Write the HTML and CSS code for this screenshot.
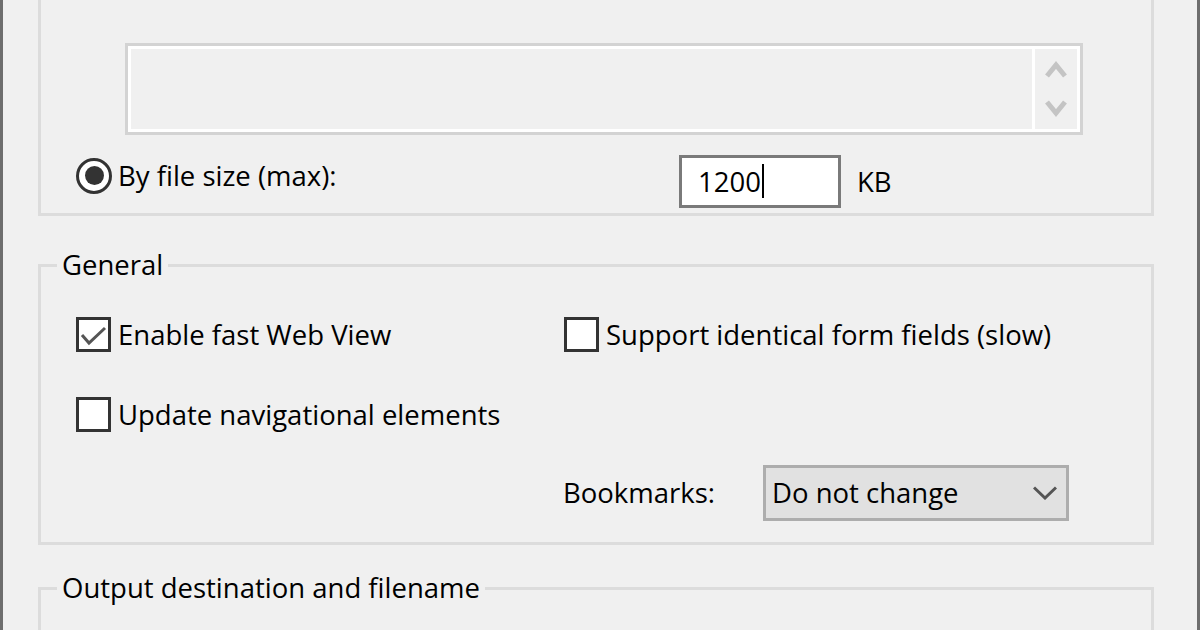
FILE: index.html
```html
<!DOCTYPE html>
<html lang="en">
<head>
<meta charset="utf-8">
<title>PDF Optimizer settings</title>
<link rel="stylesheet" href="styles.css">
</head>
<body>
<div class="window">
  <div class="group group-top">
    <div class="listbox">
      <div class="list-area"></div>
      <div class="list-scroll">
        <svg class="scroll-arrow" width="22" height="17" viewBox="0 0 22 17"><polyline points="2,15 11,4 20,15" fill="none" stroke="#c4c4c4" stroke-width="5"/></svg>
        <svg class="scroll-arrow" width="22" height="17" viewBox="0 0 22 17"><polyline points="2,2 11,13 20,2" fill="none" stroke="#c4c4c4" stroke-width="5"/></svg>
      </div>
    </div>
    <div class="size-row">
      <div class="option radio-option">
        <span class="radio"><span class="radio-dot"></span></span>
        <span class="label">By file size (max):</span>
      </div>
      <div class="edit"><span class="edit-text">1200</span><span class="caret"></span></div>
      <div class="unit">KB</div>
    </div>
  </div>

  <div class="group group-general">
    <div class="legend">General</div>
    <div class="check-row">
      <div class="option">
        <span class="checkbox"><svg width="29" height="29" viewBox="0 0 29 29"><polyline points="3,15 10,23 26,8" fill="none" stroke="#555" stroke-width="3"/></svg></span>
        <span class="label">Enable fast Web View</span>
      </div>
      <div class="option">
        <span class="checkbox"></span>
        <span class="label">Support identical form fields (slow)</span>
      </div>
    </div>
    <div class="check-row row-second">
      <div class="option">
        <span class="checkbox"></span>
        <span class="label">Update navigational elements</span>
      </div>
    </div>
    <div class="bookmarks-row">
      <div class="bookmarks-label">Bookmarks:</div>
      <div class="dropdown">
        <span>Do not change</span>
        <svg width="24" height="14" viewBox="0 0 24 14"><polyline points="1,1.5 12,12 23,1.5" fill="none" stroke="#555" stroke-width="3"/></svg>
      </div>
    </div>
  </div>

  <div class="group group-output">
    <div class="legend">Output destination and filename</div>
  </div>
</div>
</body>
</html>
```

FILE: styles.css
```css
html, body {
  margin: 0;
  padding: 0;
  background: #f0f0f0;
}

body {
  font-family: "Open Sans", "Noto Sans", "Liberation Sans", sans-serif;
  font-size: 27.5px;
  line-height: 38px;
  color: #000;
}

.window {
  box-sizing: border-box;
  width: 1200px;
  height: 630px;
  overflow: hidden;
  border-left: 3px solid #6e6e6e;
  border-right: 3px solid #6e6e6e;
  padding-left: 35px;
  background: #f0f0f0;
}

.group {
  box-sizing: border-box;
  width: 1116px;
  border: 3px solid #dcdcdc;
}

.group-top {
  border-top: none;
  height: 216px;
  padding-top: 43px;
}

.listbox {
  box-sizing: border-box;
  margin-left: 84px;
  width: 958px;
  height: 92px;
  display: flex;
  border: 3px solid #d3d3d3;
  box-shadow: inset 0 0 0 3px #fff;
  background: #f0f0f0;
}

.list-area {
  flex: 1;
}

.list-scroll {
  box-sizing: border-box;
  width: 48px;
  border-left: 3px solid #fff;
  display: flex;
  flex-direction: column;
  align-items: center;
  justify-content: center;
  gap: 22px;
  padding-right: 3px;
}

.scroll-arrow {
  display: block;
}

.size-row {
  display: flex;
  align-items: flex-start;
  padding-left: 35px;
}

.option {
  display: flex;
  align-items: center;
  gap: 7px;
  height: 35px;
  white-space: nowrap;
}

.radio-option {
  width: 603px;
  margin-top: 23px;
  gap: 6px;
}

.radio {
  box-sizing: border-box;
  width: 36px;
  height: 36px;
  border: 3px solid #333;
  border-radius: 50%;
  background: #fff;
  display: flex;
  align-items: center;
  justify-content: center;
  flex: none;
}

.radio-dot {
  width: 19px;
  height: 19px;
  border-radius: 50%;
  background: #333;
}

.edit {
  box-sizing: border-box;
  margin-top: 20px;
  width: 162px;
  height: 53px;
  border: 3px solid #7a7a7a;
  background: #fff;
  display: flex;
  align-items: center;
  padding-left: 16px;
}

.caret {
  width: 2px;
  height: 34px;
  background: #000;
  margin-left: 1px;
  margin-top: -2px;
}

.unit {
  margin-left: 16px;
  margin-top: 20px;
  height: 53px;
  display: flex;
  align-items: center;
}

.group-general {
  margin-top: 48px;
  padding-bottom: 21px;
}

.legend {
  width: fit-content;
  margin: -21px 0 0 16px;
  padding: 0 5px;
  height: 38px;
  background: #f0f0f0;
  white-space: nowrap;
}

.check-row {
  display: grid;
  grid-template-columns: 488px 1fr;
  padding-left: 35px;
  margin-top: 33px;
}

.row-second {
  margin-top: 45px;
}

.checkbox {
  box-sizing: border-box;
  width: 35px;
  height: 35px;
  border: 3px solid #333;
  background: #fff;
  flex: none;
  display: block;
}

.checkbox svg {
  display: block;
}

.bookmarks-row {
  display: flex;
  align-items: center;
  padding-left: 522px;
  margin-top: 33px;
}

.bookmarks-label {
  width: 200px;
}

.dropdown {
  box-sizing: border-box;
  width: 306px;
  height: 56px;
  border: 3px solid #adadad;
  background: #e1e1e1;
  display: flex;
  align-items: center;
  justify-content: space-between;
  padding: 0 9px 0 6px;
}

.dropdown svg {
  display: block;
}

.group-output {
  margin-top: 42px;
  height: 120px;
}
```
